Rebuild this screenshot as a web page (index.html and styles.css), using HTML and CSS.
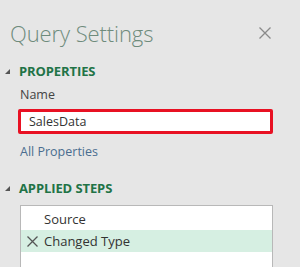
FILE: index.html
```html
<!DOCTYPE html>
<html lang="en">
<head>
  <meta charset="UTF-8" />
  <title>Query Settings</title>
  <link rel="stylesheet" href="styles.css">
</head>
<body>
  <div class="pane">
    <div class="pane-header">
      <h1 class="pane-title">Query Settings</h1>
      <svg class="close-icon" width="12" height="12" viewBox="0 0 12 12">
        <path d="M0.5 0.5 L11.5 11.5 M11.5 0.5 L0.5 11.5" stroke="#8a8a8a" stroke-width="1.3" fill="none"/>
      </svg>
    </div>

    <div class="section">
      <div class="section-title"><span class="caret"></span>PROPERTIES</div>
      <div class="section-body">
        <div class="field-label">Name</div>
        <div class="name-input">SalesData</div>
        <a class="link">All Properties</a>
      </div>
    </div>

    <div class="section steps-section">
      <div class="section-title"><span class="caret"></span>APPLIED STEPS</div>
      <div class="section-body">
        <ul class="steps">
          <li class="step">Source</li>
          <li class="step selected">
            <svg class="step-x" width="11" height="11" viewBox="0 0 11 11">
              <path d="M0.5 0.5 L10.5 10.5 M10.5 0.5 L0.5 10.5" stroke="#555" stroke-width="1.3" fill="none"/>
            </svg>
            Changed Type
          </li>
        </ul>
      </div>
    </div>
  </div>
</body>
</html>
```

FILE: styles.css
```css
html, body {
  margin: 0;
  padding: 0;
  height: 100%;
  overflow: hidden;
  background: #e6e6e6;
  font-family: "Open Sans", "Noto Sans", sans-serif;
}
.pane-header {
  display: flex;
  align-items: center;
  justify-content: space-between;
  height: 60px;
  padding: 3px 29px 0 10px;
}
.pane-title {
  margin: 0;
  font-size: 22px;
  font-weight: 300;
  color: #6e8b7c;
  letter-spacing: -0.1px;
}
.close-icon {
  display: block;
}
.section-title {
  display: flex;
  align-items: center;
  height: 16px;
  font-size: 13px;
  font-weight: 700;
  color: #217346;
  letter-spacing: -0.1px;
}
.caret {
  width: 0;
  height: 0;
  margin: 0 9px 0 5px;
  border-left: 5px solid transparent;
  border-bottom: 5px solid #555;
}
.section-body {
  padding: 0 27px 0 20px;
}
.field-label {
  margin-top: 7px;
  font-size: 12.5px;
  color: #444;
  line-height: 17px;
}
.name-input {
  margin: 6px 0 0 -2px;
  height: 19px;
  border: 3px solid #e81123;
  border-radius: 2px;
  background: #fff;
  padding: 0 8px;
  font-size: 12.5px;
  line-height: 19px;
  color: #333;
}
.link {
  display: block;
  margin-top: 9px;
  font-size: 12.5px;
  color: #4a6d8f;
  line-height: 17px;
}
.steps-section {
  margin-top: 20px;
}
.steps {
  list-style: none;
  margin: 9px 0 0 0;
  padding: 2px 0 17px 0;
  background: #fff;
  border: 1px solid #b8b8b8;
  border-bottom: none;
}
.step {
  display: flex;
  align-items: center;
  height: 22px;
  padding-left: 23px;
  font-size: 13px;
  color: #333;
}
.step.selected {
  padding-left: 6px;
  background: #d6efe2;
}
.step-x {
  margin-right: 6px;
}
```
